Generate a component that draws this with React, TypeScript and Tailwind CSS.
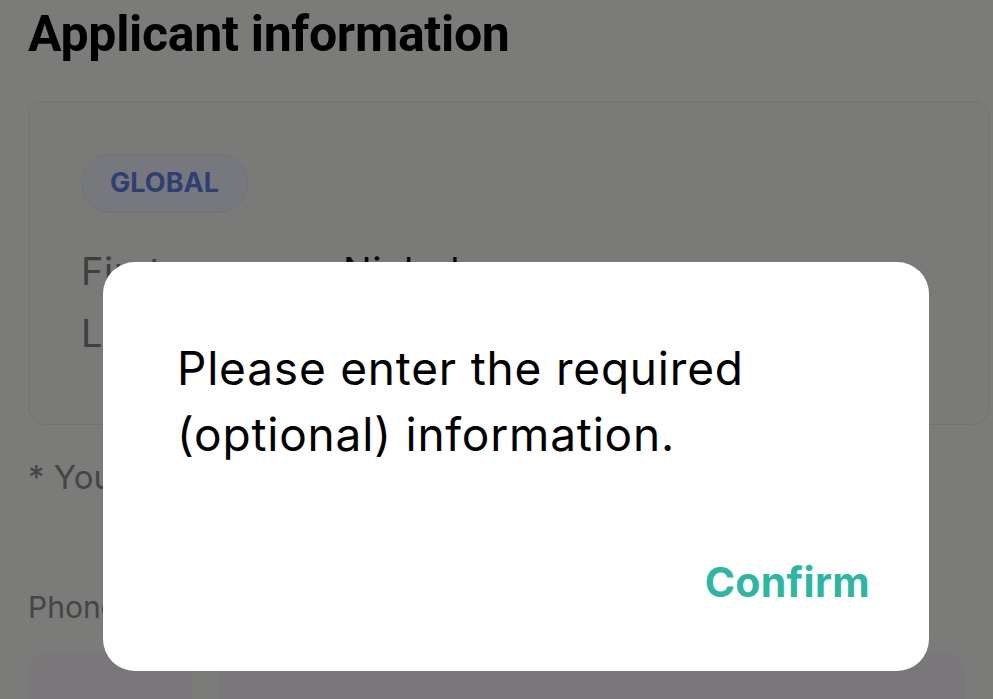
import React from "react";

const rows = [
  { label: "First name", value: "Nicholas" },
  { label: "Last name", value: "Anderson" },
];

export default function App() {
  return (
    <div
      className="relative h-[699px] w-[993px] overflow-hidden bg-[#f6f7f3]"
      style={{ fontFamily: "Inter, 'Noto Sans', sans-serif" }}
    >
      <div className="px-[28px] pt-[4px]">
        <h1
          className="text-[50px] font-bold leading-[60px] tracking-[-0.3px] text-black"
          style={{ fontFamily: "Roboto, sans-serif" }}
        >
          Applicant information
        </h1>

        <div className="mt-[37px] mr-[-25px] h-[324px] rounded-[18px] border border-[#e4e5e1] bg-[#f5f6f2] px-[52px] pt-[52px]">
          <span className="inline-flex h-[59px] w-[167px] items-center justify-center rounded-full border border-[#e3e5ee] bg-[#eef0fb] text-[27px] font-bold text-[#5b7fe6]">
            GLOBAL
          </span>
          <div className="mt-[36px] flex flex-col gap-[18px]">
            {rows.map((r) => (
              <div key={r.label} className="flex text-[38px] leading-[44px] tracking-[0.5px]">
                <span className="w-[262px] text-[#7c7d7a]">{r.label}</span>
                <span className="text-[#111]">{r.value}</span>
              </div>
            ))}
          </div>
        </div>

        <p className="mt-[30px] text-[33px] leading-[44px] text-[#8a8b88]">
          * You can edit your information here.
        </p>

        <p className="mt-[88px] text-[30px] leading-[40px] text-[#8a8b88]">
          Phone number
        </p>

        <div className="mt-[26px] flex gap-[26px]">
          <div className="h-[80px] w-[164px] rounded-t-[20px] bg-[#f3eff3]" />
          <div className="h-[80px] flex-1 rounded-t-[20px] bg-[#f3eff3]" />
        </div>
      </div>

      {/* dim overlay + alert */}
      <div className="absolute inset-0 bg-black/50" />
      <div className="absolute left-[103px] top-[262px] flex h-[409px] w-[826px] flex-col rounded-[32px] bg-white pl-[74px] pr-[59px] pt-[73px]">
        <p className="text-[46px] leading-[66px] tracking-[0.8px] text-black">
          Please enter the required
          <br />
          (optional) information.
        </p>
        <div className="mt-auto mb-[65px] flex justify-end">
          <button className="text-[41px] font-bold leading-[48px] tracking-[0.3px] text-[#2bb7a2]">
            Confirm
          </button>
        </div>
      </div>
    </div>
  );
}
